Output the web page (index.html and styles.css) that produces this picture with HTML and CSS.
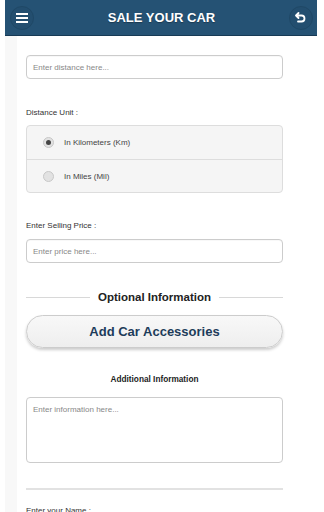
FILE: index.html
```html
<!DOCTYPE html>
<html lang="en">
<head>
    <meta charset="UTF-8">
    <meta name="viewport" content="width=device-width, initial-scale=1.0">
    <title>Sale Your Car</title>
    <link rel="stylesheet" href="styles.css">
</head>
<body>
    <div class="page">
        <div class="header">
            <span class="icon-btn">
                <svg width="12" height="10" viewBox="0 0 12 10"><rect x="0" y="0" width="12" height="2" fill="#fff"/><rect x="0" y="4" width="12" height="2" fill="#fff"/><rect x="0" y="8" width="12" height="2" fill="#fff"/></svg>
            </span>
            <h1>SALE YOUR CAR</h1>
            <span class="icon-btn">
                <svg width="12" height="12" viewBox="0 0 12 12"><path d="M3.5 1 L1 3.5 L3.5 6 M1.3 3.5 H6.5 A3 3 0 0 1 6.5 9.5 H3" fill="none" stroke="#fff" stroke-width="1.8" stroke-linecap="round" stroke-linejoin="round"/></svg>
            </span>
        </div>

        <div class="main">
            <div class="rail"></div>
            <div class="content">
                <div class="input first">Enter distance here...</div>

                <div class="label unit-label">Distance Unit :</div>
                <div class="radio-group">
                    <div class="radio-row">
                        <span class="radio checked"></span>
                        <span>In Kilometers (Km)</span>
                    </div>
                    <div class="radio-row">
                        <span class="radio"></span>
                        <span>In Miles (Mil)</span>
                    </div>
                </div>

                <div class="label price-label">Enter Selling Price :</div>
                <div class="input">Enter price here...</div>

                <div class="divider-title">
                    <span class="line"></span>
                    <span>Optional Information</span>
                    <span class="line"></span>
                </div>

                <button class="pill-button">Add Car Accessories</button>

                <div class="sub-title">Additional Information</div>
                <div class="textarea">Enter information here...</div>

                <div class="hr"></div>

                <div class="label name-label">Enter your Name :</div>
            </div>
        </div>
    </div>
</body>
</html>
```

FILE: styles.css
```css
* { margin: 0; padding: 0; box-sizing: border-box; }

body {
    font-family: 'Liberation Sans', Arial, sans-serif;
    background: #ffffff;
    color: #333333;
    overflow: hidden;
}

.page {
    width: 312px;
    margin-left: 5px;
}

.header {
    height: 36px;
    background: #255274;
    border-bottom: 1px solid #173a55;
    display: flex;
    align-items: center;
    justify-content: space-between;
    padding: 0 4px 0 5px;
}

.header h1 {
    color: #ffffff;
    font-size: 13px;
    font-weight: bold;
    text-shadow: 0 1px 1px rgba(0, 0, 0, 0.3);
}

.icon-btn {
    width: 24px;
    height: 24px;
    border-radius: 50%;
    background: #234e6f;
    border: 1px solid #1f4866;
    display: flex;
    align-items: center;
    justify-content: center;
}

.main {
    display: flex;
    height: 476px;
}

.rail {
    width: 12px;
    background: #f8f8f8;
}

.content {
    flex: 1;
    padding: 19px 34px 0 9px;
}

.input {
    height: 24px;
    border: 1px solid #cccccc;
    border-radius: 4px;
    background: #ffffff;
    font-size: 8px;
    color: #888888;
    padding: 0 6px;
    display: flex;
    align-items: center;
    box-shadow: inset 0 1px 1px rgba(0, 0, 0, 0.03);
}

.label {
    font-size: 8px;
    line-height: 10px;
    color: #333333;
}

.unit-label { margin-top: 29px; }

.radio-group {
    margin-top: 7px;
    background: #f5f5f5;
    border: 1px solid #dddddd;
    border-radius: 4px;
}

.radio-row {
    height: 33px;
    display: flex;
    align-items: center;
    padding-left: 16px;
    gap: 10px;
    font-size: 8px;
    color: #444444;
}

.radio-row + .radio-row {
    border-top: 1px solid #dddddd;
}

.radio {
    width: 11px;
    height: 11px;
    border-radius: 50%;
    background: #e2e2e2;
    border: 1px solid #c8c8c8;
    display: flex;
    align-items: center;
    justify-content: center;
}

.radio.checked::after {
    content: "";
    width: 5px;
    height: 5px;
    border-radius: 50%;
    background: #444444;
}

.price-label { margin-top: 28px; }

.price-label + .input { margin-top: 8px; }

.divider-title {
    margin-top: 27px;
    display: flex;
    align-items: center;
    gap: 8px;
    font-size: 11.5px;
    font-weight: bold;
    color: #222222;
    line-height: 14px;
}

.divider-title .line {
    flex: 1;
    height: 1px;
    background: #d8d8d8;
}

.pill-button {
    display: block;
    width: 100%;
    height: 33px;
    margin-top: 11px;
    border-radius: 17px;
    border: 1px solid #cccccc;
    background: linear-gradient(#f8f8f8, #eeeeee);
    box-shadow: 0 2px 3px rgba(0, 0, 0, 0.2);
    font-family: inherit;
    font-size: 13px;
    font-weight: bold;
    color: #1d3c5a;
}

.sub-title {
    margin-top: 27px;
    text-align: center;
    font-size: 8.25px;
    font-weight: bold;
    line-height: 10px;
    color: #222222;
}

.textarea {
    margin-top: 12px;
    height: 66px;
    border: 1px solid #cccccc;
    border-radius: 4px;
    font-size: 8px;
    color: #888888;
    padding: 7px 6px;
}

.hr {
    margin-top: 25px;
    height: 2px;
    background: #e2e2e2;
}

.name-label { margin-top: 16px; }
```
